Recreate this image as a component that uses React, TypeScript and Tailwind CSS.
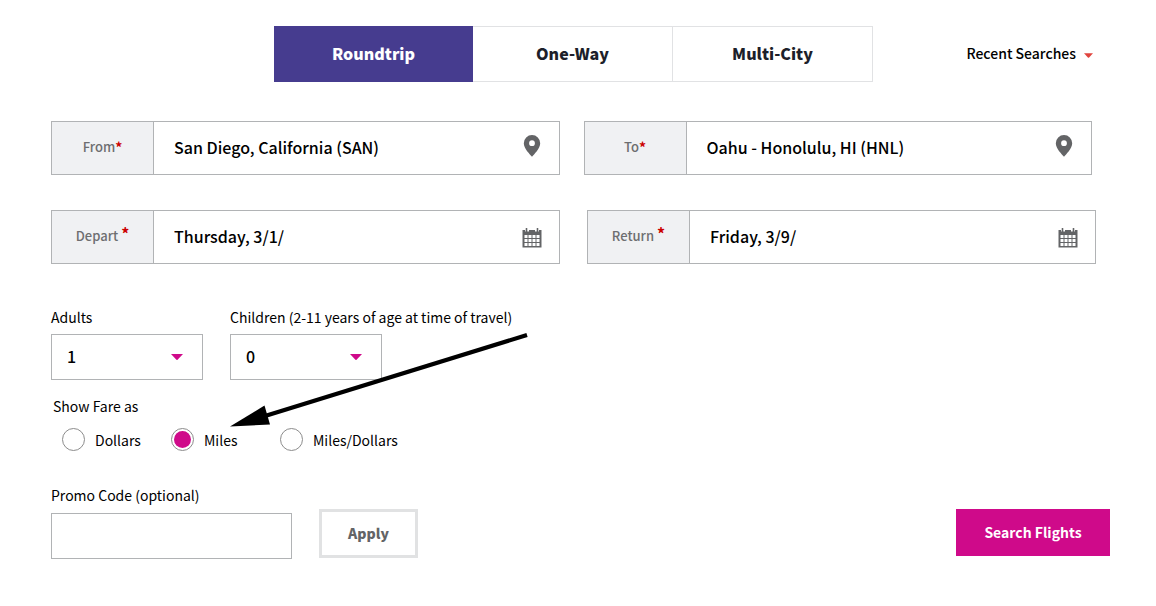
import { useState } from "react";
import type { ReactNode } from "react";

function Caret({ className }: { className: string }) {
  return (
    <svg viewBox="0 0 12 6" className={className} fill="currentColor" aria-hidden="true">
      <path d="M0 0h12L6.8 5.6a1.1 1.1 0 0 1-1.6 0z" />
    </svg>
  );
}

function PinIcon() {
  return (
    <svg viewBox="0 0 18 22" className="mb-1 h-[22px] w-[18px] text-[#636466]" aria-hidden="true">
      <path
        fill="currentColor"
        fillRule="evenodd"
        d="M9 0a8.2 8.2 0 0 0-8.2 8.2C.8 13.6 7 19.300 9 21.800c2-2.500 8.200-8.200 8.200-13.600A8.200 8.200 0 0 0 9 0zm0 5.300a2.900 2.900 0 1 1 0 5.800 2.900 2.900 0 0 1 0-5.800z"
      />
    </svg>
  );
}

function CalendarIcon() {
  const columns = [2, 6, 10, 14];
  const rows = [7, 11, 15];
  return (
    <svg viewBox="0 0 20 20" className="mt-0.5 h-5 w-5" aria-hidden="true">
      <path fill="#636466" d="M.5 2h19v17.500H.5z" />
      <path d="M5 0v3.500M15 0v3.500" stroke="#fff" strokeWidth="4" />
      <path d="M4.500 .5v3.500M15.500 .5v3.500" stroke="#636466" strokeWidth="1.600" strokeLinecap="round" />
      {rows.map((y) =>
        columns.map((x) => (
          <rect key={`${x}-${y}`} x={x + 0.5} y={y} width="3" height="3" fill="#fff" />
        )),
      )}
    </svg>
  );
}

type FieldProps = {
  id: string;
  label: string;
  value: string;
  raised?: boolean;
  icon: ReactNode;
};

function Field({ id, label, value, raised, icon }: FieldProps) {
  return (
    <div className="flex h-[54px] min-w-0 flex-1 border border-[#b1b3b5]">
      <label
        htmlFor={id}
        className="flex w-[102px] shrink-0 items-center justify-center border-r border-[#b1b3b5] bg-[#f0f1f3] pb-0.5 text-[13px] font-medium text-[#6d6e70]"
      >
        {label}
        <span
          className={
            raised
              ? "ml-[3px] pb-1.5 text-base font-bold text-[#cc0000]"
              : "text-sm font-bold text-[#cc0000]"
          }
        >
          *
        </span>
      </label>
      <input
        id={id}
        defaultValue={value}
        className="min-w-0 flex-1 bg-transparent pb-0.5 pl-5 text-base font-medium text-black outline-none"
      />
      <span className="flex w-[54px] shrink-0 items-center justify-center">{icon}</span>
    </div>
  );
}

type CountProps = { id: string; label: string; initial: string; options: string[] };

function CountSelect({ id, label, initial, options }: CountProps) {
  return (
    <div className="w-[152px]">
      <label htmlFor={id} className="block text-sm leading-5 whitespace-nowrap">
        {label}
      </label>
      <div className="relative mt-[7px]">
        <select
          id={id}
          defaultValue={initial}
          className="block h-[46px] w-full appearance-none border border-[#b1b3b5] bg-white pb-0.5 pl-[15px] text-base font-medium outline-none"
        >
          {options.map((o) => (
            <option key={o}>{o}</option>
          ))}
        </select>
        <Caret className="pointer-events-none absolute top-5 right-5 h-1.5 w-3 text-[#cf0a8a]" />
      </div>
    </div>
  );
}

const tabs = ["Roundtrip", "One-Way", "Multi-City"];
const fares = ["Dollars", "Miles", "Miles/Dollars"];

export default function App() {
  const [tab, setTab] = useState("Roundtrip");
  const [fare, setFare] = useState("Miles");

  return (
    <main className="min-h-screen bg-white pt-[26px] pr-[46px] pb-12 pl-[51px] font-['Noto_Sans_CJK_SC','Noto_Sans',sans-serif] text-black">
      <form onSubmit={(e) => e.preventDefault()}>
        <div className="mr-3.5 grid grid-cols-[1fr_auto_1fr] items-center">
          <div className="col-start-2 flex h-14">
            {tabs.map((t) => (
              <button
                key={t}
                type="button"
                onClick={() => setTab(t)}
                className={
                  t === tab
                    ? "w-[199px] bg-[#463c8f] pb-0.5 text-base font-black text-white"
                    : "w-[200px] border-y border-r border-[#e1e2e4] pb-0.5 text-base font-black text-[#1d1f2a]"
                }
              >
                {t}
              </button>
            ))}
          </div>
          <button
            type="button"
            className="mr-[3px] flex items-center gap-2 justify-self-end pb-0.5 text-sm font-medium"
          >
            Recent Searches
            <Caret className="mt-1 h-[5px] w-[9px] text-[#e0443e]" />
          </button>
        </div>

        <div className="mt-[39px] mr-[18px] flex gap-6">
          <Field id="from" label="From" value="San Diego, California (SAN)" icon={<PinIcon />} />
          <Field id="to" label="To" value="Oahu - Honolulu, HI (HNL)" icon={<PinIcon />} />
        </div>

        <div className="mt-[35px] mr-3.5 flex gap-[27px]">
          <Field id="depart" label="Depart" value="Thursday, 3/1/" raised icon={<CalendarIcon />} />
          <Field id="return" label="Return" value="Friday, 3/9/" raised icon={<CalendarIcon />} />
        </div>

        <div className="relative mt-[43px]">
          <div className="flex gap-[27px]">
            <CountSelect id="adults" label="Adults" initial="1" options={["1", "2", "3", "4", "5", "6"]} />
            <CountSelect
              id="children"
              label="Children (2-11 years of age at time of travel)"
              initial="0"
              options={["0", "1", "2", "3", "4", "5"]}
            />
          </div>

          <fieldset className="mt-4">
            <legend className="pl-0.5 text-sm leading-5">Show Fare as</legend>
            <div className="mt-3 ml-[11px] flex">
              {fares.map((f) => (
                <label key={f} className="flex min-w-[109px] items-center gap-2.5 text-sm leading-5">
                  <input
                    type="radio"
                    name="fare"
                    checked={f === fare}
                    onChange={() => setFare(f)}
                    className="h-[23px] w-[23px] shrink-0 appearance-none rounded-full border border-[#8c8c8c] bg-white bg-clip-content p-0.5 checked:bg-[#cf0a8a]"
                  />
                  {f}
                </label>
              ))}
            </div>
          </fieldset>

          <svg
            viewBox="0 0 300 96"
            className="pointer-events-none absolute top-[25px] left-[178px] h-24 w-[300px]"
            aria-hidden="true"
          >
            <path d="M36 84L298 3" stroke="#000" strokeWidth="4.200" />
            <path d="M1 94.500L35.500 73.500L41 92.500z" />
          </svg>
        </div>

        <div className="mt-[34px] flex items-end">
          <div className="w-[241px]">
            <label htmlFor="promo" className="block text-sm leading-5">
              Promo Code (optional)
            </label>
            <input
              id="promo"
              className="mt-2 block h-[46px] w-full border border-[#b1b3b5] px-4 text-base font-medium outline-none"
            />
          </div>
          <button
            type="button"
            className="mb-px ml-[27px] h-[49px] w-[99px] border-3 border-[#e1e2e3] pb-0.5 text-sm font-black text-[#636466]"
          >
            Apply
          </button>
          <button
            type="submit"
            className="mb-[3px] ml-auto h-[47px] w-[154px] bg-[#cf0a8a] pb-0.5 text-sm font-bold text-white"
          >
            Search Flights
          </button>
        </div>
      </form>
    </main>
  );
}
